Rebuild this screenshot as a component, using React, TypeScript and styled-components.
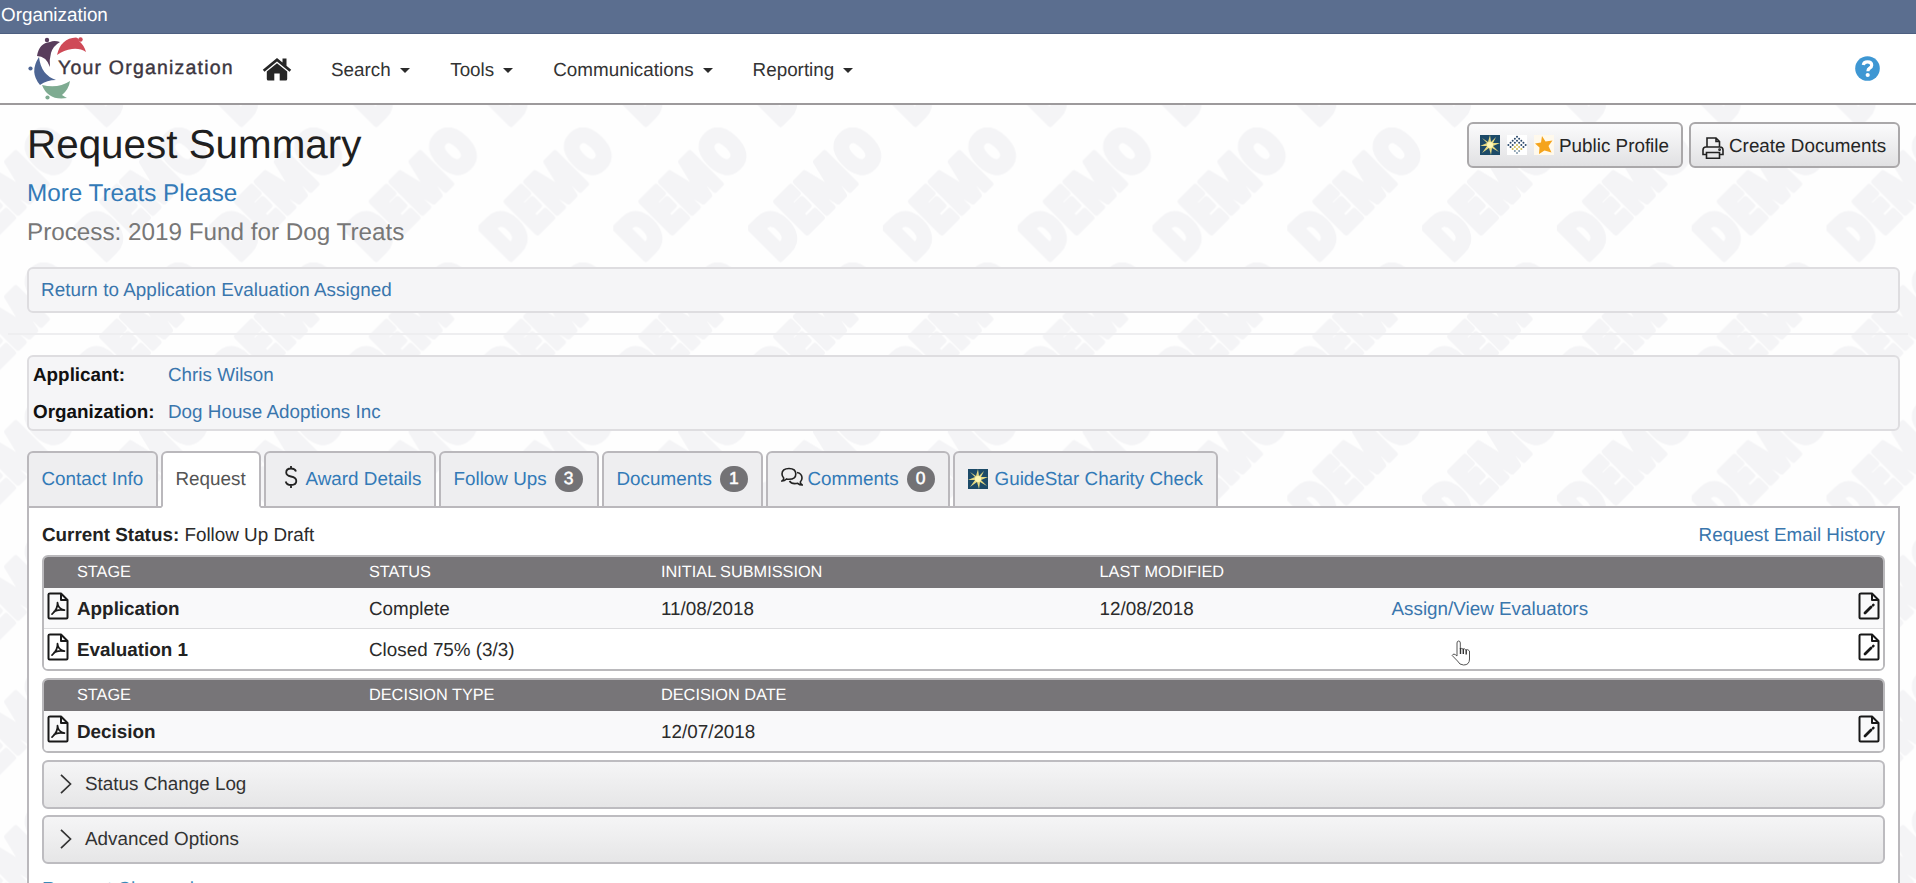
import React from "react";
import styled, { createGlobalStyle } from "styled-components";

const GlobalStyle = createGlobalStyle`
  *, *::before, *::after { box-sizing: border-box; }
  html, body { margin: 0; padding: 0; overflow: hidden; background: #fff; }
  body { font-family: "Liberation Sans", Arial, sans-serif; font-size: 18.85px; line-height: 1.42857; color: #2b2b2b; text-rendering: geometricPrecision; }
`;

const Page = styled.div`
  position: relative;
  height: 883px;
  overflow: hidden;
  background: #fefefe;
`;

const Watermark = styled.svg`
  position: absolute;
  inset: 0;
  width: 100%;
  height: 100%;
`;

const TopBar = styled.div`
  position: relative;
  height: 34px;
  padding-left: 1px;
  background: #5b6e8f;
  border-bottom: 1px solid #4d5f80;
  color: #fff;
  line-height: 29px;
`;

const Nav = styled.nav`
  position: relative;
  display: flex;
  align-items: center;
  height: 71px;
  padding: 0 36px 0 28px;
  background: #fff;
  border-bottom: 2px solid #9d9a9c;
`;

const Brand = styled.div`
  display: flex;
  align-items: center;
  width: 234px;
  height: 100%;
`;

const BrandMark = styled.svg`
  flex: none;
  width: 60px;
  height: 66px;
`;

const BrandName = styled.span`
  margin: 1px 0 0 -30px;
  color: #3c3640;
  font-size: 19.5px;
  letter-spacing: 1.2px;
  white-space: nowrap;
  -webkit-text-stroke: 0.4px #3c3640;
`;

const HomeIcon = styled.svg`
  width: 30px;
  height: 24px;
  margin-right: 39px;
`;

const MenuItem = styled.a<{ $gap: number }>`
  display: flex;
  align-items: center;
  margin-right: ${(p) => p.$gap}px;
  padding-top: 3px;
  color: #333;

  &::after {
    content: "";
    margin: 1px 0 0 9px;
    border-top: 5.5px solid #2b2b2b;
    border-left: 5.5px solid transparent;
    border-right: 5.5px solid transparent;
  }
`;

const HelpIcon = styled.svg`
  width: 25px;
  height: 25px;
  margin: 0 0 0 auto;
`;

const Content = styled.main`
  position: relative;
  padding: 14px 16px 0 27px;
`;

const Heading = styled.header`
  display: flex;
  justify-content: space-between;
  align-items: flex-start;
  height: 148px;
`;

const Title = styled.h1`
  margin: 0;
  color: #1f1f1f;
  font-size: 40.4px;
  font-weight: 400;
  line-height: 51px;
`;

const ProjectLink = styled.a`
  display: block;
  margin-top: 7px;
  color: #337ab7;
  font-size: 24.25px;
  line-height: 34px;
`;

const Process = styled.div`
  margin-top: 5px;
  color: #777;
  font-size: 24.25px;
  line-height: 34px;
`;

const Actions = styled.div`
  display: flex;
  gap: 6px;
  margin-top: 3px;
`;

const ActionButton = styled.button<{ $width: number }>`
  display: flex;
  align-items: center;
  width: ${(p) => p.$width}px;
  height: 46px;
  padding: 1px 0 0 11px;
  border: 2px solid #aaa8aa;
  border-radius: 6px;
  background: linear-gradient(#fbfbfc, #e1e1e3);
  color: #262626;
  font: 18.85px "Liberation Sans", Arial, sans-serif;
  text-rendering: inherit;
  white-space: nowrap;
`;

const SmallIcon = styled.svg<{ $size: number; $right: number; $drop?: number }>`
  flex: none;
  width: ${(p) => p.$size}px;
  height: ${(p) => p.$size}px;
  margin: ${(p) => p.$drop ?? -2}px ${(p) => p.$right}px 0 0;
`;

const ReturnBar = styled.div`
  height: 46px;
  padding-left: 12px;
  border: 2px solid #dedde0;
  border-radius: 6px;
  background: #f5f5f7;
  line-height: 42px;
  letter-spacing: 0.05px;
`;

const Link = styled.a`
  color: #3a76ad;
`;

const Divider = styled.hr`
  height: 2px;
  margin: 20px -8px 20px -19px;
  border: 0;
  background: #eeeef0;
`;

const Applicant = styled.dl`
  display: grid;
  grid-template-columns: 135px 1fr;
  grid-auto-rows: 36.5px;
  height: 76px;
  margin: 0;
  padding: 0 0 0 4px;
  border: 2px solid #dedde0;
  border-radius: 6px;
  background: #f5f5f7;
  line-height: 36px;

  dt { font-weight: 700; color: #111; }
  dd { margin: 0; }
`;

const Tabs = styled.div`
  position: relative;
  z-index: 1;
  display: flex;
  gap: 3px;
  height: 57px;
  margin: 20px 0 -2px;
`;

const Tab = styled.a<{ $width: number; $active?: boolean }>`
  display: flex;
  align-items: center;
  width: ${(p) => p.$width}px;
  padding: 0 0 0 12.5px;
  border: 2px solid #bab8bc;
  border-bottom-color: ${(p) => (p.$active ? "#fff" : "#bab8bc")};
  border-radius: 6px 6px 0 0;
  background: ${(p) => (p.$active ? "#fff" : "#eeeef0")};
  color: ${(p) => (p.$active ? "#555" : "#337ab7")};
  white-space: nowrap;
`;

const Badge = styled.span`
  display: grid;
  place-items: center;
  width: 28px;
  height: 26px;
  margin: -1px 0 0 8px;
  border-radius: 13px;
  background: #737275;
  color: #fff;
  font-size: 17.5px;
  line-height: 1;
  -webkit-text-stroke: 0.5px #fff;
`;

const Panel = styled.section`
  height: 400px;
  padding: 12px 13px;
  border: 2px solid #bab8bc;
  background: #fff;
`;

const StatusLine = styled.div`
  display: flex;
  justify-content: space-between;
  height: 35px;
  line-height: 29px;

  b { color: #222; }
`;

const Table = styled.div`
  margin-bottom: 7px;
  border: 2px solid #bab9bc;
  border-radius: 6px;
  overflow: hidden;
`;

const Row = styled.div<{ $shade?: boolean; $head?: boolean; $last?: boolean }>`
  display: grid;
  grid-template-columns: 33px 292px 292px 438.5px 292px 1fr 28px;
  align-items: center;
  height: ${(p) => (p.$head ? 31 : p.$last ? 40 : 41)}px;
  padding-top: ${(p) => (p.$head ? 1 : 2)}px;
  border-bottom: ${(p) => (p.$head || p.$last ? "0" : "1px solid #dcdcde")};
  background: ${(p) => (p.$head ? "#777578" : p.$shade ? "#f9f9fa" : "#fff")};
  color: ${(p) => (p.$head ? "#fff" : "#2b2b2b")};
  font-size: ${(p) => (p.$head ? 16.3 : 18.85)}px;

  b { color: #222; }
`;

const FileSvg = styled.svg`
  width: 22px;
  height: 28px;
  margin: -6px 0 0 3px;
`;

const Accordion = styled.button`
  display: flex;
  align-items: center;
  gap: 13px;
  width: 100%;
  height: 49px;
  margin: 0 0 6px;
  padding: 0 0 1px 16px;
  border: 2px solid #bdbcc0;
  border-radius: 6px;
  background: linear-gradient(#f5f5f6, #e6e6e7);
  color: #333;
  font: 18.85px "Liberation Sans", Arial, sans-serif;
  text-rendering: inherit;
`;

const FooterLink = styled.a`
  display: block;
  margin-top: 12px;
  color: #3a8ab7;
`;

const Pointer = styled.svg`
  position: absolute;
  left: 1451px;
  top: 640px;
  width: 20px;
  height: 26px;
`;

const GuideStar = ({ right }: { right: number }) => (
  <SmallIcon $size={20} $right={right} viewBox="0 0 20 20">
    <rect width="20" height="20" fill="#1c4a68" />
    <path d="M10 0 11 7 16 2 13 8 20 8 13 11 19 17 12 13 11 20 9 13 2 18 7 11 0 11 7 8 2 3 8 7Z" fill="#e5d983" />
    <circle cx="10" cy="10" r="3" fill="#fff8b5" />
  </SmallIcon>
);

const FilePage = ({ children }: { children: React.ReactNode }) => (
  <FileSvg viewBox="0 0 22 28" fill="none" stroke="#181818" strokeWidth="2" strokeLinejoin="round" strokeLinecap="round">
    <path d="M3 1.5H14L20.5 8V25.5Q20.5 26.5 19.5 26.5H2.5Q1.5 26.5 1.5 25.5V2.5Q1.5 1.5 3 1.5ZM14 1.5V8H20.5" />
    {children}
  </FileSvg>
);

const PdfIcon = () => (
  <FilePage>
    <path d="M10.5 10.5Q11 17 17.5 18.2M10.5 10.5Q11 17 5 22.2M7 19.5Q11 17 17.5 18.2" strokeWidth="1.7" />
  </FilePage>
);

const EditIcon = () => (
  <FilePage>
    <path d="M7 21 13 15" strokeWidth="2.8" />
    <path d="M15 13.3 15.4 12.9" strokeWidth="2.6" />
  </FilePage>
);

const Chevron = () => (
  <svg width="12" height="20" viewBox="0 0 12 20" fill="none" stroke="#333" strokeWidth="1.7">
    <path d="M1 .8 10.5 10 1 19.2" />
  </svg>
);

const diamond: [number, number, string][] = [];
for (let r = 0; r < 5; r++) {
  for (let c = 0; c < 5; c++) {
    const x = 10 + (c - r) * 2.15;
    const y = 1.7 + (c + r) * 2.05;
    diamond.push([x, y, r < 2 || c < 2 ? "#2d4a6c" : y > 14 ? "#7f97a8" : "#cdb84e"]);
  }
}

export default function App() {
  return (
    <Page>
      <GlobalStyle />
      <Watermark>
        <defs>
          <pattern id="demo" x="478.5" y="127.5" width="134.8" height="135" patternUnits="userSpaceOnUse">
            <text
              transform="translate(29.5 134.5) rotate(-45)"
              fontFamily="Open Sans"
              fontWeight="800"
              fontSize="61"
              textLength="155"
              lengthAdjust="spacingAndGlyphs"
              fill="#f4f4f6"
              stroke="#f4f4f6"
              strokeWidth="6"
              strokeLinejoin="round"
            >
              DEMO
            </text>
          </pattern>
        </defs>
        <rect width="100%" height="100%" fill="url(#demo)" />
      </Watermark>

      <TopBar>Organization</TopBar>
      <Nav>
        <Brand>
          <BrandMark viewBox="28 36 60 66">
            <path d="M57 55Q61 38 76 37.5Q79 38 79 41Q84 45 86 52Q80 48 72 49Q64 50 57 55Z" fill="#cf4a57" />
            <circle cx="80.5" cy="39.5" r="2.2" fill="#cf4a57" />
            <path d="M37 56Q39 43 50 42Q54 40 60 42Q53 46 51 53Q49 60 50 67Q46 56 37 56Z" fill="#593d5c" />
            <circle cx="47" cy="40" r="2.2" fill="#593d5c" />
            <path d="M39 57Q41 75 56 80Q47 80 40 85Q29 72 39 57Z" fill="#4d6594" />
            <circle cx="30.5" cy="68.5" r="2.1" fill="#4d6594" />
            <path d="M42 85Q58 89 70 81Q69 89 62 95Q65 97 67 98Q48 101 42 85Z" fill="#7eab91" />
            <circle cx="47.5" cy="97.5" r="2.1" fill="#7eab91" />
          </BrandMark>
          <BrandName>Your Organization</BrandName>
        </Brand>
        <HomeIcon viewBox="0 0 30 24" fill="#262626">
          <path d="M15 1 .8 12.8 2.5 14.8 15 4.5 27.5 14.8 29.2 12.8 24.5 8.8V1.5H20.5V5.5Z" />
          <path d="M15 6.2 4.8 14.6V22Q4.8 23.5 6.3 23.5H12.3V16.5H17.7V23.5H23.7Q25.2 23.5 25.2 22V14.6Z" />
        </HomeIcon>
        <MenuItem $gap={40.5}>Search</MenuItem>
        <MenuItem $gap={40}>Tools</MenuItem>
        <MenuItem $gap={40}>Communications</MenuItem>
        <MenuItem $gap={0}>Reporting</MenuItem>
        <HelpIcon viewBox="0 0 25 25">
          <circle cx="12.5" cy="12.5" r="12.3" fill="#3e97d3" />
          <path d="M8.3 9Q8.8 5.9 12.5 5.9Q16.7 5.9 16.7 9.2Q16.7 11 14.8 12Q12.9 13 12.9 15.2" fill="none" stroke="#fff" strokeWidth="3.2" />
          <circle cx="12.7" cy="19" r="2.1" fill="#fff" />
        </HelpIcon>
      </Nav>

      <Content>
        <Heading>
          <div>
            <Title>Request Summary</Title>
            <ProjectLink>More Treats Please</ProjectLink>
            <Process>Process: 2019 Fund for Dog Treats</Process>
          </div>
          <Actions>
            <ActionButton $width={216}>
              <GuideStar right={7} />
              <SmallIcon $size={20} $right={7} viewBox="0 0 20 20">
                <rect width="20" height="20" fill="#fff" />
                {diamond.map(([x, y, fill], i) => (
                  <circle key={i} cx={x} cy={y} r="1" fill={fill} />
                ))}
              </SmallIcon>
              <SmallIcon $size={20} $right={5} viewBox="0 0 20 20">
                <rect width="20" height="20" fill="#fff9ec" />
                <path d="M8 1 11.5 6.5 18.5 5.5 14.5 11 17.5 17.5 10.5 15.5 5 19 5.5 12.5 1 8.5 7 7.5Z" fill="#f5a41c" />
              </SmallIcon>
              Public Profile
            </ActionButton>
            <ActionButton $width={211}>
              <SmallIcon $size={22} $right={5} $drop={5} viewBox="0 0 22 22" fill="none" stroke="#222" strokeWidth="1.6">
                <path d="M5 10V1H14L17.5 4.5V10M14 1V4.5H17.5M4.5 17.5H1V13Q1 10 4 10H18Q21 10 21 13V17.5H17.5M4.5 15.5H17.5V21.2H4.5Z" />
                <circle cx="17.6" cy="12.7" r=".6" />
              </SmallIcon>
              Create Documents
            </ActionButton>
          </Actions>
        </Heading>

        <ReturnBar>
          <Link>Return to Application Evaluation Assigned</Link>
        </ReturnBar>
        <Divider />
        <Applicant>
          <dt>Applicant:</dt>
          <dd><Link>Chris Wilson</Link></dd>
          <dt>Organization:</dt>
          <dd><Link>Dog House Adoptions Inc</Link></dd>
        </Applicant>

        <Tabs>
          <Tab $width={131}>Contact Info</Tab>
          <Tab $width={100} $active>Request</Tab>
          <Tab $width={172}>
            <SmallIcon $size={24} $right={3} viewBox="0 0 24 24" $drop={-5} fill="none" stroke="#222" strokeWidth="1.8">
              <path d="M17 6.5Q16 3.5 12 3.5Q7.2 3.5 7.2 7.5Q7.2 10.5 12 11.5Q17.3 12.5 17.3 16Q17.3 20 12 20Q7.5 20 6.7 16.5M12 1V4M12 20V23" />
            </SmallIcon>
            Award Details
          </Tab>
          <Tab $width={160}>Follow Ups<Badge>3</Badge></Tab>
          <Tab $width={161}>Documents<Badge>1</Badge></Tab>
          <Tab $width={184}>
            <SmallIcon $size={22} $right={5} $drop={-5} viewBox="0 0 22 22" fill="none" stroke="#222" strokeWidth="1.6">
              <path d="M1 15Q2.8 13.7 2.7 12Q1 10.3 1 8Q1 2.5 8 2.5Q14.8 2.5 14.8 8Q14.8 13.3 8 13.3Q6.8 13.3 5.5 13Q3.5 15 1 15Z" />
              <path d="M16 6.5Q21 7.5 21 12Q21 14.3 19.3 16Q19.3 17.7 21.2 19Q18.5 19 16.7 17.3Q10.5 18.5 8.5 15" />
            </SmallIcon>
            Comments<Badge>0</Badge>
          </Tab>
          <Tab $width={265}><GuideStar right={7} />GuideStar Charity Check</Tab>
        </Tabs>

        <Panel>
          <StatusLine>
            <span><b>Current Status:</b> Follow Up Draft</span>
            <Link>Request Email History</Link>
          </StatusLine>
          <Table>
            <Row $head>
              <span /><span>STAGE</span><span>STATUS</span><span>INITIAL SUBMISSION</span><span>LAST MODIFIED</span>
            </Row>
            <Row $shade>
              <PdfIcon /><b>Application</b><span>Complete</span><span>11/08/2018</span><span>12/08/2018</span>
              <Link>Assign/View Evaluators</Link><EditIcon />
            </Row>
            <Row $last>
              <PdfIcon /><b>Evaluation 1</b><span>Closed 75% (3/3)</span><span /><span /><span /><EditIcon />
            </Row>
          </Table>
          <Table>
            <Row $head>
              <span /><span>STAGE</span><span>DECISION TYPE</span><span>DECISION DATE</span>
            </Row>
            <Row $shade $last>
              <PdfIcon /><b>Decision</b><span /><span>12/07/2018</span><span /><span /><EditIcon />
            </Row>
          </Table>
          <Accordion><Chevron />Status Change Log</Accordion>
          <Accordion><Chevron />Advanced Options</Accordion>
          <FooterLink>Request Changed</FooterLink>
        </Panel>
      </Content>

      <Pointer viewBox="0 0 20 26">
        <path d="M6 15V3Q6 1 7.7 1Q9.3 1 9.3 3V9Q10.5 7.8 12 9Q13.5 8.2 14.8 9.8Q17 9 18.5 11V19Q18.5 25 12.5 25Q8.5 25 6.5 21L1.2 15.5Q2.5 12.5 6 16Z" fill="#fff" stroke="#555" />
        <path d="M9.5 8V14M12.3 9V14M15.2 10V14.5" stroke="#333" strokeWidth="1.4" />
      </Pointer>
    </Page>
  );
}
